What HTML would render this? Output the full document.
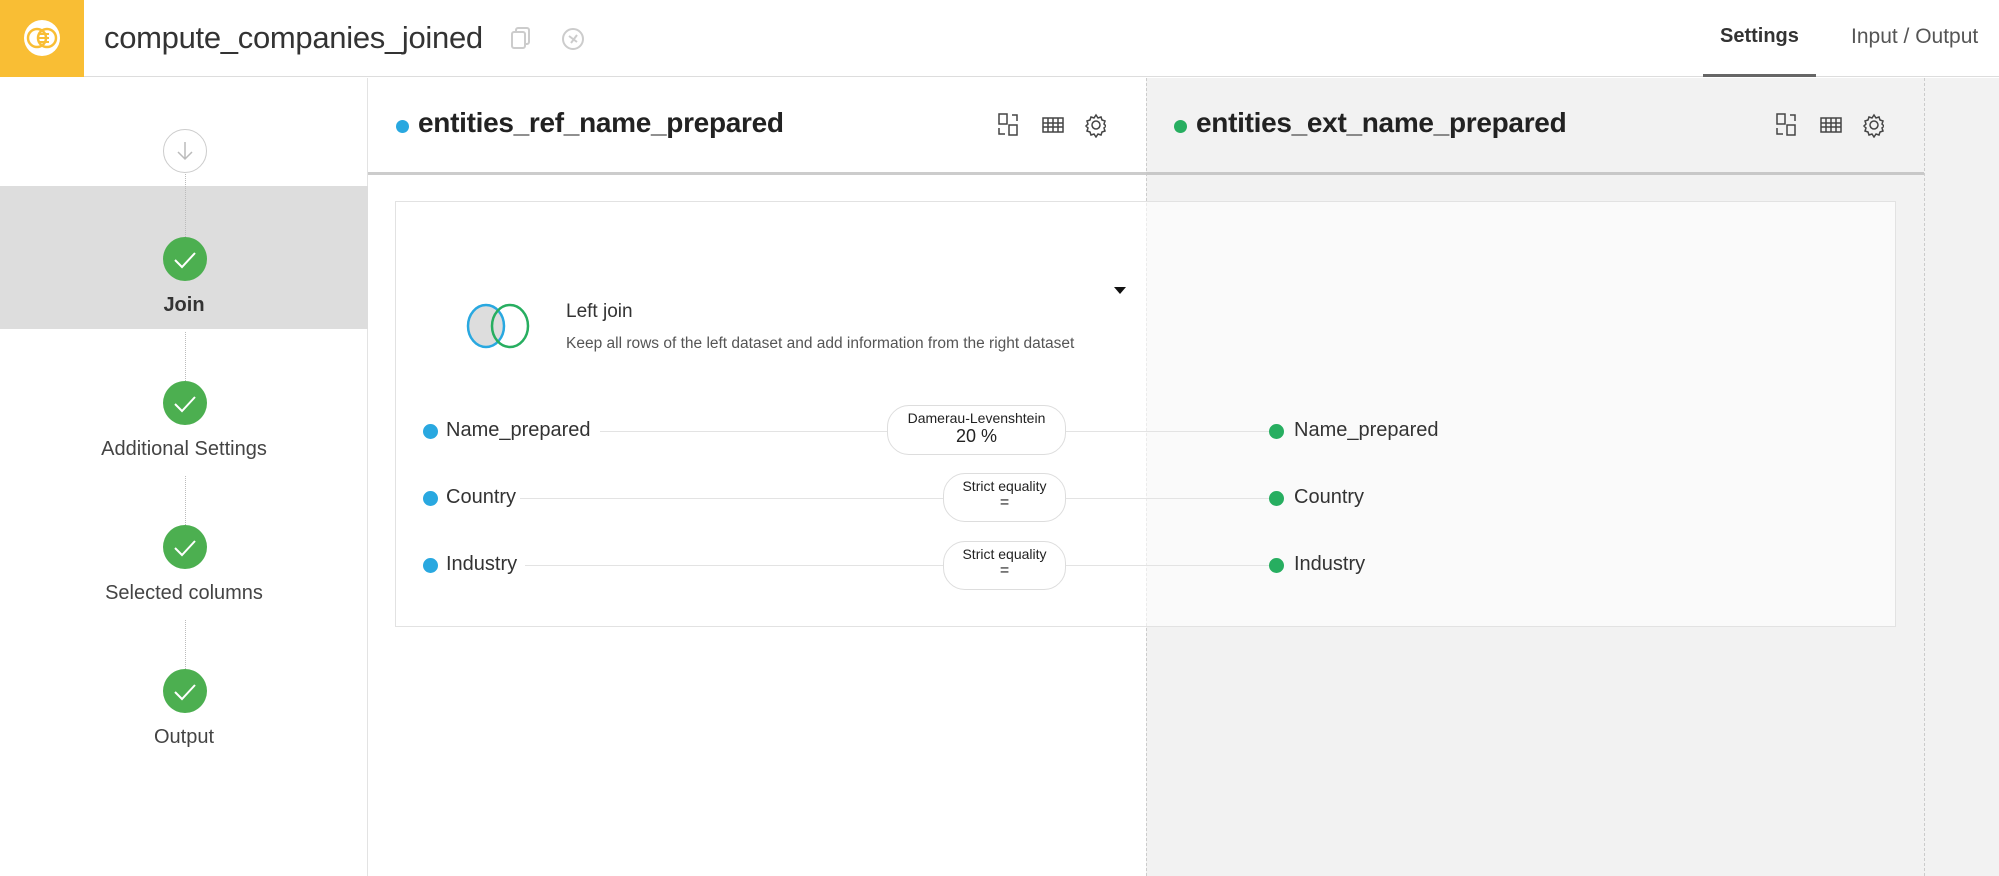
<!DOCTYPE html>
<html><head><meta charset="utf-8"><style>
*{margin:0;padding:0;box-sizing:border-box}
body{width:1999px;height:876px;overflow:hidden;background:#fff;font-family:"Liberation Sans",sans-serif;color:#333;position:relative}
.a{position:absolute}
.hdr{left:0;top:0;width:1999px;height:77px;border-bottom:1px solid #ddd;background:#fff}
.logo{left:0;top:0;width:84px;height:77px;background:#f9be34}
.title{left:104px;top:20px;font-size:31px;color:#333;letter-spacing:-0.3px}
.tab{top:25px}
.side{left:0;top:78px;width:368px;height:798px;border-right:1px solid #e3e3e3;background:#fff}
.sel{left:0;top:186px;width:368px;height:143px;background:#ddd}
.chk{width:44px;height:44px;border-radius:50%;background:#4caf50;left:163px}
.lbl{width:368px;left:0;text-align:center;font-size:20px;color:#444}
.vl{left:185px;width:1px;border-left:1px dotted #bbb}
.right{left:1146px;top:78px;width:853px;height:798px;background:#f2f2f2;border-left:1px dashed #ccc}
.edge{left:1924px;top:78px;width:1px;height:798px;border-left:1px dashed #ccc}
.ph{top:172px;height:3px;background:#ccc}
.pt{top:107px;font-size:28px;font-weight:bold;color:#222;letter-spacing:-0.3px}
.dot{border-radius:50%}
.card{left:395px;top:201px;width:1501px;height:426px;border:1px solid #e2e2e2;background:rgba(255,255,255,0.6)}
.cardL{left:396px;top:202px;width:750px;height:424px;background:#fff}
.row{font-size:20px;color:#333}
.line{height:1px;background:#e3e3e3}
.pill{border:1px solid #ddd;border-radius:22px;background:#fff;text-align:center;color:#222}
</style></head><body>
<div class="a hdr"></div>
<div class="a logo"><svg width="84" height="77"><circle cx="42" cy="38" r="18" fill="#fff"/><circle cx="37" cy="38" r="9" fill="none" stroke="#f9be34" stroke-width="2.5"/><circle cx="47" cy="38" r="9" fill="none" stroke="#f9be34" stroke-width="2.5"/><path d="M39 34h10M39 38h10M39 42h10" stroke="#f9be34" stroke-width="2"/></svg></div>
<div class="a title">compute_companies_joined</div>
<svg class="a" style="left:510px;top:26px" width="22" height="24"><rect x="6" y="2" width="13" height="16" rx="2" fill="none" stroke="#ccc" stroke-width="2"/><rect x="2" y="6" width="13" height="16" rx="2" fill="#fff" stroke="#ccc" stroke-width="2"/></svg>
<svg class="a" style="left:561px;top:27px" width="24" height="24"><circle cx="12" cy="12" r="10" fill="none" stroke="#ccc" stroke-width="2"/><path d="M8 9l8 6M10 16l6-8" stroke="#ccc" stroke-width="2"/></svg>
<div class="a tab" style="left:1720px;color:#333;font-weight:bold;font-size:20px">Settings</div>
<div class="a" style="left:1703px;top:74px;width:113px;height:3px;background:#666"></div>
<div class="a tab" style="left:1851px;color:#555;font-size:21px">Input / Output</div>

<div class="a side"></div>
<div class="a sel"></div>
<div class="a" style="left:163px;top:129px;width:44px;height:44px;border-radius:50%;border:1px solid #ccc;background:#fff"><svg width="42" height="42"><path d="M21 12v17M14 22l7 7 7-7" fill="none" stroke="#bbb" stroke-width="1.5"/></svg></div>
<div class="a vl" style="top:174px;height:63px"></div>
<div class="a vl" style="top:332px;height:49px"></div>
<div class="a vl" style="top:476px;height:49px"></div>
<div class="a vl" style="top:620px;height:49px"></div>
<div class="a chk" style="top:237px"><svg width="44" height="44"><path d="M12 23l7 7 13-14" fill="none" stroke="#fff" stroke-width="2"/></svg></div>
<div class="a chk" style="top:381px"><svg width="44" height="44"><path d="M12 23l7 7 13-14" fill="none" stroke="#fff" stroke-width="2"/></svg></div>
<div class="a chk" style="top:525px"><svg width="44" height="44"><path d="M12 23l7 7 13-14" fill="none" stroke="#fff" stroke-width="2"/></svg></div>
<div class="a chk" style="top:669px"><svg width="44" height="44"><path d="M12 23l7 7 13-14" fill="none" stroke="#fff" stroke-width="2"/></svg></div>
<div class="a lbl" style="top:294px;font-weight:bold;color:#333">Join</div>
<div class="a lbl" style="top:438px">Additional Settings</div>
<div class="a lbl" style="top:582px">Selected columns</div>
<div class="a lbl" style="top:726px">Output</div>

<div class="a right"></div>
<div class="a edge"></div>
<div class="a ph" style="left:368px;width:778px"></div>
<div class="a ph" style="left:1146px;width:778px;background:#c8c8c8"></div>
<div class="a dot" style="left:396px;top:120px;width:13px;height:13px;background:#29a8e0"></div>
<div class="a pt" style="left:418px">entities_ref_name_prepared</div>
<div class="a dot" style="left:1174px;top:120px;width:13px;height:13px;background:#27ae60"></div>
<div class="a pt" style="left:1196px">entities_ext_name_prepared</div>
<svg class="a" style="left:996px;top:112px" width="110" height="26"><g fill="none" stroke="#444" stroke-width="1.5"><rect x="3" y="2" width="8" height="10"/><rect x="13" y="13" width="8" height="10"/><path d="M3 16v6h6M21 9V3h-5"/><rect x="47" y="6" width="20" height="14"/><path d="M47 11h20M47 15h20M52 6v14M57 6v14M62 6v14"/><circle cx="100" cy="13" r="4"/><path d="M100 3l2 3 3-1 1 3 3 1-1 3 2 2-2 2 1 3-3 1-1 3-3-1-2 3-2-3-3 1-1-3-3-1 1-3-2-2 2-2-1-3 3-1 1-3 3 1z"/></g></svg>
<svg class="a" style="left:1774px;top:112px" width="110" height="26"><g fill="none" stroke="#444" stroke-width="1.5"><rect x="3" y="2" width="8" height="10"/><rect x="13" y="13" width="8" height="10"/><path d="M3 16v6h6M21 9V3h-5"/><rect x="47" y="6" width="20" height="14"/><path d="M47 11h20M47 15h20M52 6v14M57 6v14M62 6v14"/><circle cx="100" cy="13" r="4"/><path d="M100 3l2 3 3-1 1 3 3 1-1 3 2 2-2 2 1 3-3 1-1 3-3-1-2 3-2-3-3 1-1-3-3-1 1-3-2-2 2-2-1-3 3-1 1-3 3 1z"/></g></svg>

<div class="a card"></div>
<div class="a cardL"></div>
<svg class="a" style="left:460px;top:300px" width="76" height="52"><ellipse cx="26" cy="26" rx="18" ry="21" fill="#ddd" stroke="#29a8e0" stroke-width="2.5"/><ellipse cx="50" cy="26" rx="18" ry="21" fill="none" stroke="#27ae60" stroke-width="2.5"/></svg>
<div class="a" style="left:566px;top:301px;font-size:19px;color:#333">Left join</div>
<div class="a" style="left:566px;top:335px;font-size:15.5px;color:#555">Keep all rows of the left dataset and add information from the right dataset</div>
<div class="a" style="left:1114px;top:287px;width:0;height:0;border-left:6px solid transparent;border-right:6px solid transparent;border-top:7px solid #111"></div>

<div class="a line" style="left:600px;top:431px;width:680px"></div>
<div class="a line" style="left:520px;top:498px;width:760px"></div>
<div class="a line" style="left:525px;top:565px;width:755px"></div>
<div class="a dot" style="left:423px;top:424px;width:15px;height:15px;background:#29a8e0"></div>
<div class="a dot" style="left:423px;top:491px;width:15px;height:15px;background:#29a8e0"></div>
<div class="a dot" style="left:423px;top:558px;width:15px;height:15px;background:#29a8e0"></div>
<div class="a row" style="left:446px;top:419px">Name_prepared</div>
<div class="a row" style="left:446px;top:486px">Country</div>
<div class="a row" style="left:446px;top:553px">Industry</div>
<div class="a dot" style="left:1269px;top:424px;width:15px;height:15px;background:#27ae60"></div>
<div class="a dot" style="left:1269px;top:491px;width:15px;height:15px;background:#27ae60"></div>
<div class="a dot" style="left:1269px;top:558px;width:15px;height:15px;background:#27ae60"></div>
<div class="a row" style="left:1294px;top:419px">Name_prepared</div>
<div class="a row" style="left:1294px;top:486px">Country</div>
<div class="a row" style="left:1294px;top:553px">Industry</div>
<div class="a pill" style="left:887px;top:405px;width:179px;height:50px"><div style="font-size:14px;margin-top:4px">Damerau-Levenshtein</div><div style="font-size:18px">20 %</div></div>
<div class="a pill" style="left:943px;top:473px;width:123px;height:49px"><div style="font-size:14px;margin-top:4px">Strict equality</div><div style="font-size:16px">=</div></div>
<div class="a pill" style="left:943px;top:541px;width:123px;height:49px"><div style="font-size:14px;margin-top:4px">Strict equality</div><div style="font-size:16px">=</div></div>
</body></html>
